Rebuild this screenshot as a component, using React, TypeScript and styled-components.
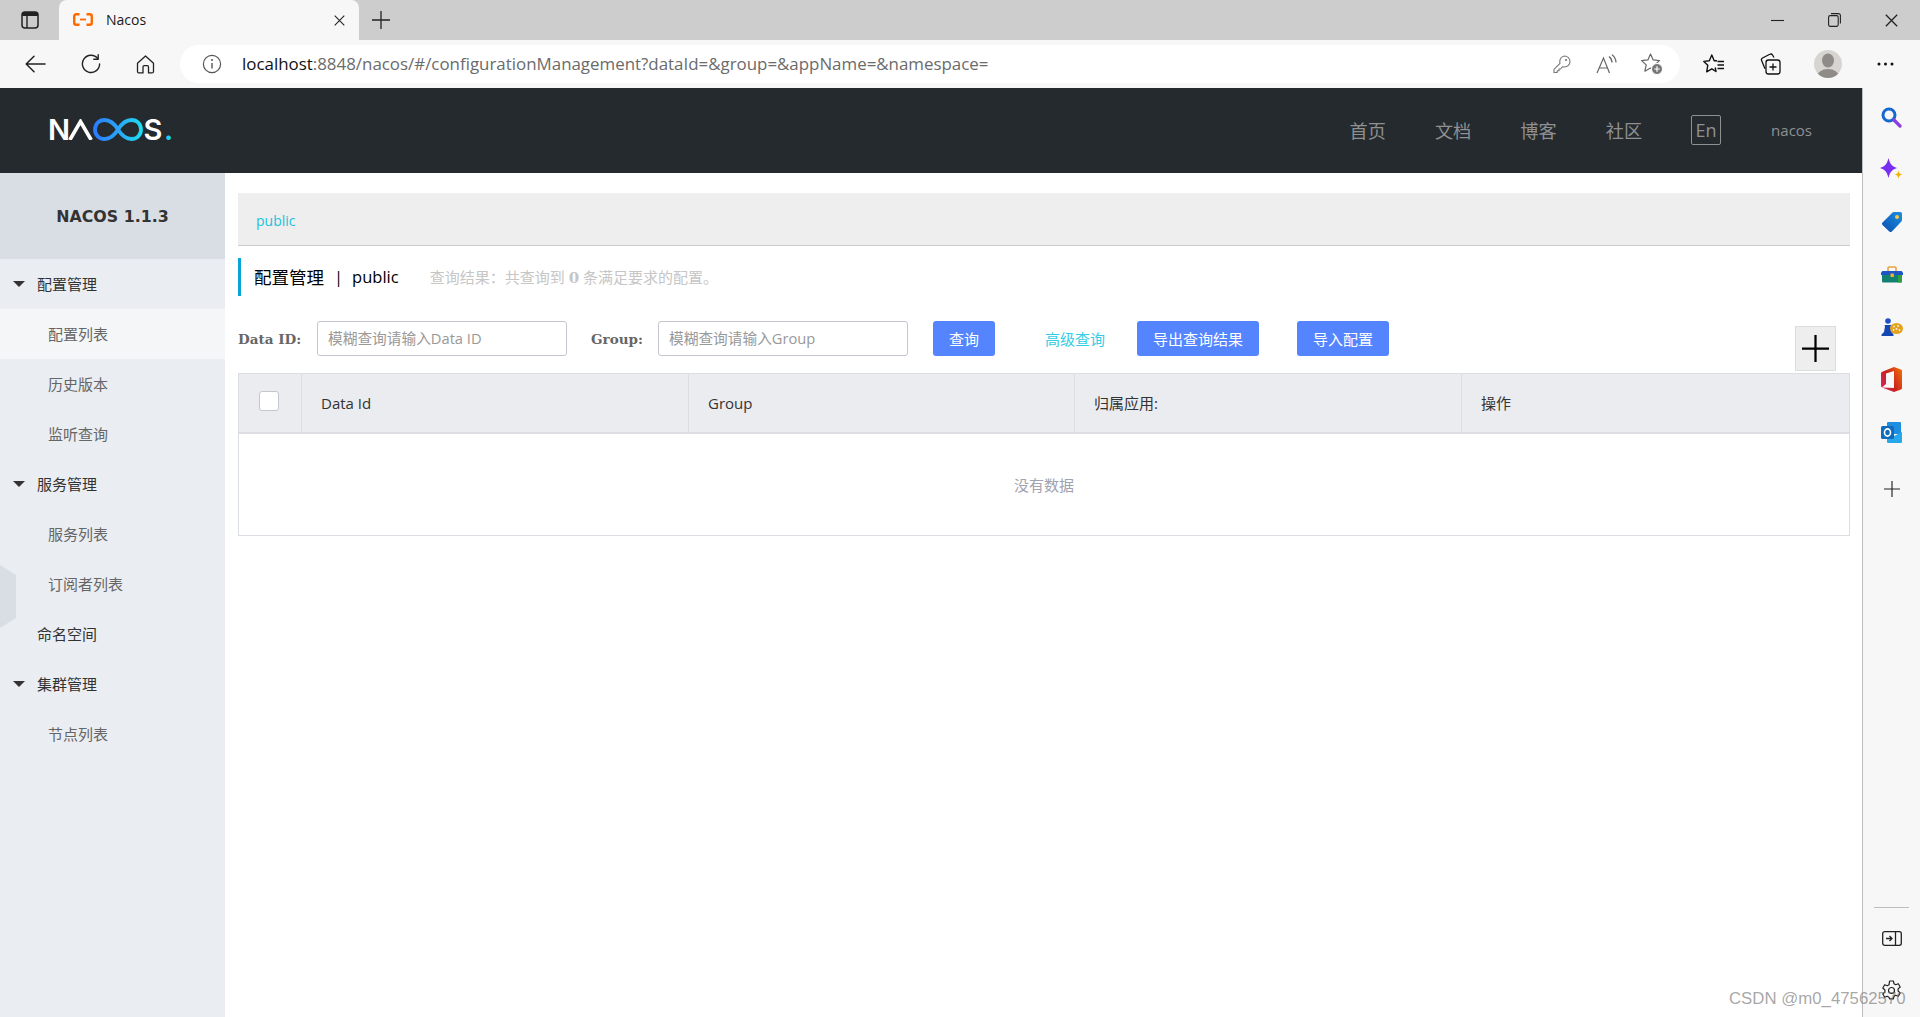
import React from "react";
import styled, { createGlobalStyle } from "styled-components";

const UI = `"Open Sans", "Noto Sans CJK SC", sans-serif`;

const Global = createGlobalStyle`
  html, body { margin: 0; padding: 0; overflow: hidden; background: #fff; }
  * { box-sizing: border-box; }
`;

const Root = styled.div`
  position: relative;
  width: 1920px;
  height: 1017px;
  display: flex;
  flex-direction: column;
  overflow: hidden;
  font-family: ${UI};
`;

/* browser chrome */
const TabStrip = styled.div`
  height: 40px;
  flex: none;
  display: flex;
  background: #cdcdcd;
`;
const TabActions = styled.div`
  width: 59px;
  display: flex;
  align-items: center;
  justify-content: center;
  padding: 0 0 1px 1px;
`;
const Tab = styled.div`
  width: 300px;
  height: 40px;
  display: flex;
  align-items: center;
  padding: 0 14px;
  background: #f7f7f7;
  border-radius: 8px 8px 0 0;
  color: #1a1a1a;
  font-size: 14px;
`;
const TabTitle = styled.span`
  margin: 0 0 2px 13px;
  flex: 1;
`;
const NewTab = styled.div`
  margin-left: 13px;
  width: 18px;
  display: flex;
  align-items: center;
`;
const WindowControls = styled.div`
  margin-left: auto;
  display: flex;
`;
const WindowButton = styled.div`
  width: 57px;
  height: 40px;
  display: flex;
  align-items: center;
  justify-content: center;
`;
const Toolbar = styled.div`
  height: 49px;
  flex: none;
  display: flex;
  align-items: flex-start;
  padding: 5px 0 0 8px;
  background: #f7f7f7;
  border-bottom: 1px solid #c6c6c6;
`;
const ToolButton = styled.div<{ $w?: number }>`
  width: ${(p) => p.$w ?? 55}px;
  height: 38px;
  flex: none;
  display: flex;
  align-items: center;
  justify-content: center;
`;
const AddressBar = styled.div`
  width: 1500px;
  height: 38px;
  margin: 0 6px 0 7px;
  padding: 0 6px 0 22px;
  display: flex;
  align-items: center;
  background: #fff;
  border-radius: 19px;
`;
const Url = styled.div`
  margin: 0 0 2px 20px;
  flex: 1;
  font-size: 16.9px;
  color: #6b6b6b;
  white-space: nowrap;
`;
const UrlHost = styled.span`
  color: #111;
`;

/* page */
const Body = styled.div`
  flex: 1;
  display: flex;
  min-height: 0;
  margin-top: -1px;
`;
const Page = styled.div`
  width: 1862px;
  flex: none;
  display: flex;
  flex-direction: column;
`;
const Header = styled.header`
  height: 85px;
  flex: none;
  display: flex;
  align-items: center;
  justify-content: space-between;
  padding: 0 50px 0 48px;
  background: #252a2f;
`;
const Logo = styled.div`
  display: flex;
  align-items: center;
  height: 32px;
  margin-bottom: 3px;
  font-family: Inter, sans-serif;
  font-weight: 600;
  font-size: 29px;
  color: #fff;
`;
const LogoDot = styled.span`
  color: #1cd0ee;
  margin-left: 1.5px;
`;
const TopNav = styled.nav`
  display: flex;
  align-items: center;
  gap: 49px;
  padding-bottom: 2px;
`;
const TopLink = styled.span`
  font-size: 18.2px;
  color: #8e9092;
`;
const LangBox = styled.span`
  width: 30px;
  height: 30px;
  display: flex;
  align-items: center;
  justify-content: center;
  border: 1px solid #8e9092;
  border-radius: 2px;
  font-size: 18px;
  color: #8e9092;
`;
const UserName = styled.span`
  margin-left: 1px;
  font-size: 15px;
  color: #8e9092;
`;
const Content = styled.div`
  flex: 1;
  display: flex;
  min-height: 0;
`;

/* left menu */
const Sidebar = styled.aside`
  position: relative;
  width: 225px;
  flex: none;
  background: #eaedf1;
`;
const SidebarTitle = styled.div`
  height: 86px;
  display: flex;
  align-items: center;
  justify-content: center;
  background: #d9dee4;
  font-family: "DejaVu Sans", sans-serif;
  font-weight: 700;
  font-size: 15.8px;
  color: #333;
`;
const MenuItem = styled.div<{ $indent: number; $active?: boolean; $sub?: boolean }>`
  height: 50px;
  display: flex;
  align-items: center;
  padding: 0 0 1px ${(p) => p.$indent}px;
  font-size: 15px;
  color: ${(p) => (p.$sub ? "#666" : "#333")};
  background: ${(p) => (p.$active ? "#f4f6f8" : "transparent")};
`;
const Caret = styled.span`
  width: 0;
  height: 0;
  margin-right: 12px;
  border-left: 6px solid transparent;
  border-right: 6px solid transparent;
  border-top: 6px solid #333;
`;
const FoldHandle = styled.div`
  position: absolute;
  left: 0;
  top: 392px;
  width: 16px;
  height: 63px;
  background: #d9dee4;
  clip-path: polygon(0 0, 100% 16%, 100% 84%, 0 100%);
`;

/* main */
const Main = styled.main`
  flex: 1;
  min-width: 0;
  padding: 20px 12px 0 13px;
  background: #fff;
`;
const Breadcrumb = styled.div`
  height: 53px;
  padding: 2px 0 0 18px;
  display: flex;
  align-items: center;
  background: #eee;
  border-bottom: 1px solid #ccc;
  font-size: 14px;
  color: #19c2dc;
`;
const TitleRow = styled.div`
  height: 38px;
  margin-top: 12px;
  padding: 0 0 2px 13px;
  display: flex;
  align-items: center;
  border-left: 3px solid #09a5d6;
`;
const PageTitle = styled.span`
  font-size: 17.5px;
  color: #000;
`;
const TitleSep = styled.span`
  margin: 0 9px 0 10px;
  font-size: 16.5px;
  color: #000;
`;
const TitleSub = styled.span`
  font-size: 16.5px;
  color: #000;
`;
const ResultNote = styled.span`
  margin-left: 31px;
  font-size: 15px;
  color: #c6c6c6;
`;
const ResultCount = styled.b`
  font-family: "DejaVu Serif", serif;
  margin: 0 4px;
`;
const FilterRow = styled.div`
  height: 35px;
  margin-top: 25px;
  display: flex;
  align-items: center;
`;
const FieldLabel = styled.label<{ $w: number; $ml?: number }>`
  width: ${(p) => p.$w}px;
  margin-left: ${(p) => p.$ml ?? 0}px;
  flex: none;
  font-family: "DejaVu Serif", serif;
  font-weight: 700;
  font-size: 13.5px;
  color: #666;
`;
const TextField = styled.input`
  width: 250px;
  height: 35px;
  flex: none;
  padding: 0 10px 2px;
  border: 1px solid #c4c6cf;
  border-radius: 3px;
  background: #fff;
  outline: none;
  font-family: ${UI};
  font-size: 14.7px;
  &::placeholder {
    color: #999;
    opacity: 1;
  }
`;
const PrimaryButton = styled.button<{ $w: number; $ml: number }>`
  width: ${(p) => p.$w}px;
  margin-left: ${(p) => p.$ml}px;
  height: 35px;
  flex: none;
  padding: 0 0 1px;
  border: none;
  border-radius: 3px;
  background: #5584ff;
  color: #fff;
  font-family: ${UI};
  font-size: 15px;
`;
const TextLink = styled.a`
  margin-left: 50px;
  flex: none;
  font-size: 15px;
  color: #33cde5;
`;
const PlusButton = styled.div`
  width: 41px;
  height: 45px;
  margin: 5px 14px 0 auto;
  align-self: flex-start;
  flex: none;
  display: flex;
  align-items: center;
  justify-content: center;
  background: #eee;
  border: 1px solid #ddd;
`;
const Table = styled.div`
  margin-top: 17px;
  height: 163px;
  border: 1px solid #dcdee3;
  display: flex;
  flex-direction: column;
`;
const TableHead = styled.div`
  height: 60px;
  flex: none;
  display: grid;
  grid-template-columns: 63px 387px 386px 387px 1fr;
  background: #ebecf0;
  border-bottom: 2px solid #dcdee3;
`;
const HeadCell = styled.div<{ $last?: boolean }>`
  display: flex;
  align-items: center;
  padding: 0 0 1px 19px;
  font-size: 15px;
  color: #333;
  border-right: ${(p) => (p.$last ? "none" : "1px solid #dcdee3")};
`;
const CheckCell = styled.div`
  padding: 17px 0 0 20px;
  border-right: 1px solid #dcdee3;
`;
const CheckBox = styled.span`
  display: block;
  width: 20px;
  height: 20px;
  background: #fff;
  border: 1px solid #c4c6cf;
  border-radius: 3px;
`;
const EmptyCell = styled.div`
  flex: 1;
  display: flex;
  align-items: center;
  justify-content: center;
  padding-bottom: 1px;
  font-size: 15px;
  color: #a0a2ad;
`;

/* Edge side panel */
const SidePanel = styled.aside`
  flex: 1;
  display: flex;
  flex-direction: column;
  align-items: center;
  padding-top: 3px;
  background: #f7f7f7;
  border-left: 1px solid #bdbdbd;
`;
const SideSlot = styled.div<{ $mt?: number }>`
  width: 100%;
  height: 52.5px;
  flex: none;
  margin-top: ${(p) => p.$mt ?? 0}px;
  display: flex;
  align-items: center;
  justify-content: center;
`;
const SideRule = styled.div`
  width: 35px;
  height: 1px;
  margin: auto 0 4px;
  background: #bdbdbd;
`;
const Watermark = styled.div`
  position: absolute;
  left: 1729px;
  top: 989px;
  font-family: "Liberation Sans", sans-serif;
  font-size: 16.8px;
  line-height: 20px;
  color: rgba(110, 110, 110, 0.62);
  white-space: nowrap;
`;

/* icons */
const stroke = { fill: "none", stroke: "#222", strokeWidth: 1.3, strokeLinecap: "round" as const, strokeLinejoin: "round" as const };

const TabsIcon = () => (
  <svg width="18" height="18" viewBox="0 0 18 18">
    <rect x="1" y="1" width="16" height="16" rx="3" fill="none" stroke="#222" strokeWidth="1.5" />
    <path d="M1 5V4a3 3 0 0 1 3-3h10a3 3 0 0 1 3 3v1z" fill="#222" />
    <path d="M6 5v12" stroke="#222" strokeWidth="1.4" />
  </svg>
);
const Favicon = () => (
  <svg width="20" height="13" viewBox="0 0 20 13" style={{ flex: "none", marginBottom: 1 }}>
    <path d="M6.5 1.3H3.2A2 2 0 0 0 1.2 3.3v6.4a2 2 0 0 0 2 2h3.3M13.5 1.3h3.3a2 2 0 0 1 2 2v6.4a2 2 0 0 1-2 2h-3.3" fill="none" stroke="#ff6a00" strokeWidth="2.4" />
    <path d="M7 6.5h6" stroke="#ff6a00" strokeWidth="1.8" />
  </svg>
);
const CloseIcon = ({ s = 11 }: { s?: number }) => (
  <svg width={s} height={s} viewBox="0 0 11 11">
    <path d="M.7.7l9.6 9.6M10.3.7L.7 10.3" stroke="#222" strokeWidth="1.1" />
  </svg>
);
const PlusIcon = ({ s = 18, w = 1.3, c = "#222" }: { s?: number; w?: number; c?: string }) => (
  <svg width={s} height={s} viewBox="0 0 18 18">
    <path d="M9 0v18M0 9h18" stroke={c} strokeWidth={w} />
  </svg>
);
const MinimizeIcon = () => (
  <svg width="13" height="13" viewBox="0 0 13 13">
    <path d="M0 6.5h13" stroke="#222" strokeWidth="1.1" />
  </svg>
);
const RestoreIcon = () => (
  <svg width="13" height="14" viewBox="0 0 13 14">
    <rect x=".6" y="2.6" width="9.6" height="10.8" rx="1.6" fill="none" stroke="#222" strokeWidth="1.1" />
    <path d="M3 .6h7.4a2 2 0 0 1 2 2v8" fill="none" stroke="#222" strokeWidth="1.1" />
  </svg>
);
const BackIcon = () => (
  <svg width="21" height="18" viewBox="0 0 21 18">
    <path d="M20 9H1.5M9 1.2L1.2 9 9 16.8" {...stroke} strokeWidth={1.5} />
  </svg>
);
const RefreshIcon = () => (
  <svg width="20" height="20" viewBox="0 0 20 20">
    <path d="M16.8 4.6A8.6 8.6 0 1 0 18.6 10" {...stroke} strokeWidth={1.4} />
    <path d="M17.2.8v4.4h-4.4" {...stroke} strokeWidth={1.4} />
  </svg>
);
const HomeIcon = () => (
  <svg width="19" height="19" viewBox="0 0 19 19">
    <path d="M1.5 8.2L9.5 1l8 7.2v8.2a1.5 1.5 0 0 1-1.5 1.5h-3.5v-6a1.2 1.2 0 0 0-1.2-1.2H8.2A1.2 1.2 0 0 0 7 11.9v6H3a1.5 1.5 0 0 1-1.5-1.5z" {...stroke} />
  </svg>
);
const InfoIcon = () => (
  <svg width="20" height="20" viewBox="0 0 20 20" style={{ flex: "none" }}>
    <circle cx="10" cy="10" r="8.6" fill="none" stroke="#555" strokeWidth="1.2" />
    <path d="M10 9v5.5" stroke="#555" strokeWidth="1.4" />
    <circle cx="10" cy="6" r="1" fill="#555" />
  </svg>
);
const KeyIcon = () => (
  <svg width="18" height="19" viewBox="0 0 18 19">
    <path d="M11.5 1a5.5 5.5 0 0 1 0 11c-.7 0-1.3-.1-1.9-.3L7.5 14H6v1.8H4.2v1.7H1v-3.1l6-6c-.1-.5-.2-1-.2-1.5A5.5 5.5 0 0 1 11.5 1z" fill="none" stroke="#777" strokeWidth="1.1" strokeLinejoin="round" />
    <circle cx="13" cy="5" r="1.1" fill="#777" />
  </svg>
);
const ReadAloudIcon = () => (
  <svg width="21" height="20" viewBox="0 0 21 20">
    <path d="M1 19L7.5 4l6 15M3.2 14h8.8" fill="none" stroke="#666" strokeWidth="1.2" />
    <path d="M13 2.5c2 1.5 3 3.5 3 6M16 .8c2.5 2 4 4.7 4 7.7" fill="none" stroke="#666" strokeWidth="1.2" />
  </svg>
);
const FavAddIcon = () => (
  <svg width="22" height="22" viewBox="0 0 22 22">
    <path d="M9.5 1l2.7 5.9 6.3.7-4.7 4.3 1.3 6.3-5.600-3.200-5.600 3.200 1.300-6.300L.6 7.600l6.300-.7z" fill="none" stroke="#666" strokeWidth="1.2" strokeLinejoin="round" />
    <circle cx="16" cy="16" r="5.5" fill="#777" stroke="#fff" strokeWidth="1" />
    <path d="M16 13.3v5.4M13.3 16h5.4" stroke="#fff" strokeWidth="1.2" />
  </svg>
);
const FavListIcon = () => (
  <svg width="22" height="20" viewBox="0 0 22 20">
    <path d="M14 6.7h-2.800L8.800 1 6.300 6.700l-5.500.7 4 3.800-1.100 6.600 5.100-3 4.200 2.700-.8-4" fill="none" stroke="#111" strokeWidth="1.4" strokeLinejoin="round" />
    <path d="M14.5 7.5H21M14.5 11H21M14.5 14.5H21" stroke="#111" strokeWidth="1.3" />
  </svg>
);
const CollectionsIcon = () => (
  <svg width="21" height="22" viewBox="0 0 21 22">
    <rect x="6" y="7" width="14" height="14" rx="2.5" fill="none" stroke="#111" strokeWidth="1.3" />
    <path d="M13 10.5v7M9.5 14h7" stroke="#111" strokeWidth="1.3" />
    <path d="M14 4.5L12.5 2a2 2 0 0 0-2.700-.7L2.500 5a2 2 0 0 0-.8 2.700l3.300 8" fill="none" stroke="#111" strokeWidth="1.3" />
  </svg>
);
const Avatar = () => (
  <svg width="28" height="28" viewBox="0 0 28 28">
    <defs>
      <clipPath id="av">
        <circle cx="14" cy="14" r="14" />
      </clipPath>
    </defs>
    <circle cx="14" cy="14" r="14" fill="#d6d5d2" />
    <g clipPath="url(#av)" fill="#8f8c88">
      <ellipse cx="14" cy="10.5" rx="6" ry="7" />
      <ellipse cx="14" cy="26.5" rx="11" ry="7.5" />
    </g>
  </svg>
);
const DotsIcon = () => (
  <svg width="17" height="4" viewBox="0 0 17 4">
    <circle cx="2" cy="2" r="1.5" fill="#111" />
    <circle cx="8.5" cy="2" r="1.5" fill="#111" />
    <circle cx="15" cy="2" r="1.5" fill="#111" />
  </svg>
);
const LogoPeak = () => (
  <svg width="25" height="21" viewBox="0 0 25 21" style={{ margin: "0 0 0 -2.5px" }}>
    <path d="M1.8 21L12.5 2.500 23.200 21" fill="none" stroke="#fff" strokeWidth="3.6" />
  </svg>
);
const LogoLoop = () => (
  <svg width="50" height="23" viewBox="0 0 50 23" style={{ margin: "0 1px 0 0" }}>
    <defs>
      <linearGradient id="inf" x1="0" x2="1" y1="0" y2="0">
        <stop offset="0" stopColor="#2b7dff" />
        <stop offset="0.55" stopColor="#2aa8f5" />
        <stop offset="1" stopColor="#1cdcf2" />
      </linearGradient>
    </defs>
    <path
      d="M25 11.5C21 5 16.5 2 11.5 2 5.8 2 2 6.300 2 11.5S5.800 21 11.500 21C16.500 21 21 18 25 11.500S33.500 2 38.500 2C44.200 2 48 6.300 48 11.500S44.200 21 38.500 21C33.500 21 29 18 25 11.500z"
      fill="none"
      stroke="url(#inf)"
      strokeWidth="3.8"
    />
  </svg>
);
const BigPlus = () => <PlusIcon s={27} w={1.5} c="#000" />;

const SearchApp = () => (
  <svg width="21" height="21" viewBox="0 0 21 21">
    <circle cx="8" cy="8" r="6" fill="none" stroke="#1468d0" strokeWidth="3" />
    <path d="M13 13l6 6" stroke="#8a3ee0" strokeWidth="3.2" strokeLinecap="round" />
  </svg>
);
const SparkleApp = () => (
  <svg width="23" height="23" viewBox="0 0 23 23">
    <path d="M8.5 0C10 6 11.5 8 17 10 11.500 12 10 14 8.500 20 7 14 5.500 12 0 10 5.500 8 7 6 8.500 0z" fill="#7a2ff0" />
    <path d="M18.5 12.500c.4 2.500 1.200 3.300 4 4-2.800.7-3.600 1.500-4 4.500-.4-3-1.200-3.800-4-4.500 2.800-.7 3.600-1.500 4-4z" fill="#f5b400" />
  </svg>
);
const TagApp = () => (
  <svg width="22" height="22" viewBox="0 0 22 22">
    <defs>
      <linearGradient id="tag" x1="0" x2="1" y1="1" y2="0">
        <stop offset="0" stopColor="#0a4fb0" />
        <stop offset="1" stopColor="#1b8fe0" />
      </linearGradient>
    </defs>
    <path d="M13 1h6.5a1.500 1.500 0 0 1 1.500 1.500V9a2 2 0 0 1-.6 1.400l-9.500 10a1.800 1.800 0 0 1-2.600 0L1.500 14a1.800 1.800 0 0 1 0-2.600l10-9.800A2 2 0 0 1 13 1z" fill="url(#tag)" />
    <circle cx="16" cy="6" r="2" fill="#f7c948" />
  </svg>
);
const ToolboxApp = () => (
  <svg width="22" height="17" viewBox="0 0 22 17">
    <path d="M7 5V2a1 1 0 0 1 1-1h6a1 1 0 0 1 1 1v3" fill="none" stroke="#e8a33d" strokeWidth="1.6" />
    <path d="M0 6.5L1.5 5h19L22 6.500V9H0z" fill="#1d55c4" />
    <path d="M1 9h20v6.5a1 1 0 0 1-1 1H2a1 1 0 0 1-1-1z" fill="#14806f" />
    <path d="M17 9h4v6.5a1 1 0 0 1-1 1h-3z" fill="#2ea043" />
    <rect x="9.5" y="7.5" width="3.4" height="3.4" rx=".6" fill="#f2b431" />
  </svg>
);
const ChessApp = () => (
  <svg width="22" height="19" viewBox="0 0 22 19">
    <circle cx="7" cy="3" r="2.8" fill="#1f4fc8" />
    <path d="M3.5 7h7l-1 1.500 1 5.500 2 2.500V18H.5v-1.500l2.500-2.500 1-5.500z" fill="#1446b5" />
    <ellipse cx="15.5" cy="10.5" rx="6.5" ry="5.5" fill="#e3a11f" />
    <g fill="#fff3cf">
      <circle cx="13" cy="8.5" r=".9" />
      <circle cx="17" cy="8" r=".9" />
      <circle cx="15.5" cy="11" r=".9" />
      <circle cx="12.5" cy="12" r=".9" />
      <circle cx="18.5" cy="12" r=".9" />
    </g>
  </svg>
);
const OfficeApp = () => (
  <svg width="21" height="25" viewBox="0 0 21 25">
    <defs>
      <linearGradient id="off" x1="0" x2="1" y1="0.8" y2="0.2">
        <stop offset="0" stopColor="#d9265f" />
        <stop offset="0.45" stopColor="#c9201e" />
        <stop offset="1" stopColor="#ec6a08" />
      </linearGradient>
    </defs>
    <path d="M13 0l7 2.500c.6.200 1 .8 1 1.400v17.200c0 .6-.4 1.200-1 1.400L13 25 1 20.500 13 21V4L5 6.500V17L1 20.500c-.6-.5-1-1-1-1.700V6.500c0-.8.500-1.500 1.200-1.800z" fill="url(#off)" />
  </svg>
);
const OutlookApp = () => (
  <svg width="21" height="21" viewBox="0 0 21 21">
    <rect x="6" y="0" width="14" height="12" rx="1" fill="#1f8ee0" />
    <path d="M6 10l7 4 8-4v10a1 1 0 0 1-1 1H7a1 1 0 0 1-1-1z" fill="#28a8ea" />
    <rect x="0" y="4" width="13" height="13" rx="1.5" fill="#0f6cbd" />
    <ellipse cx="6.5" cy="10.5" rx="3" ry="3.6" fill="none" stroke="#fff" strokeWidth="1.6" />
  </svg>
);
const PanelIcon = () => (
  <svg width="20" height="15" viewBox="0 0 20 15">
    <rect x=".7" y=".7" width="18.6" height="13.6" rx="2" fill="none" stroke="#222" strokeWidth="1.3" />
    <path d="M13.5 1v13" stroke="#222" strokeWidth="1.3" />
    <path d="M4 7.5h6M7.5 5l2.500 2.500L7.500 10" fill="none" stroke="#222" strokeWidth="1.3" />
  </svg>
);
const GearIcon = () => (
  <svg width="21" height="21" viewBox="0 0 21 21">
    <path d="M8.6 1h3.800l.6 2.800 1.700.9 2.600-1 1.900 3.300-2.100 1.900v2.100l2.100 1.900-1.900 3.300-2.600-1-1.700.9-.6 2.800H8.600L8 17.200l-1.700-.9-2.600 1-1.900-3.300 2.100-1.900V10L1.800 8l1.900-3.300 2.600 1L8 4.800z" fill="none" stroke="#222" strokeWidth="1.2" strokeLinejoin="round" />
    <circle cx="10.5" cy="10.5" r="3" fill="none" stroke="#222" strokeWidth="1.2" />
  </svg>
);

const menu: { label: string; indent: number; caret?: boolean; sub?: boolean; active?: boolean }[] = [
  { label: "配置管理", indent: 13, caret: true },
  { label: "配置列表", indent: 48, sub: true, active: true },
  { label: "历史版本", indent: 48, sub: true },
  { label: "监听查询", indent: 48, sub: true },
  { label: "服务管理", indent: 13, caret: true },
  { label: "服务列表", indent: 48, sub: true },
  { label: "订阅者列表", indent: 48, sub: true },
  { label: "命名空间", indent: 37 },
  { label: "集群管理", indent: 13, caret: true },
  { label: "节点列表", indent: 48, sub: true },
];

export default function App() {
  return (
    <Root>
      <Global />
      <TabStrip>
        <TabActions>
          <TabsIcon />
        </TabActions>
        <Tab>
          <Favicon />
          <TabTitle>Nacos</TabTitle>
          <CloseIcon />
        </Tab>
        <NewTab>
          <PlusIcon />
        </NewTab>
        <WindowControls>
          <WindowButton>
            <MinimizeIcon />
          </WindowButton>
          <WindowButton>
            <RestoreIcon />
          </WindowButton>
          <WindowButton>
            <CloseIcon s={13} />
          </WindowButton>
        </WindowControls>
      </TabStrip>
      <Toolbar>
        <ToolButton>
          <BackIcon />
        </ToolButton>
        <ToolButton>
          <RefreshIcon />
        </ToolButton>
        <ToolButton>
          <HomeIcon />
        </ToolButton>
        <AddressBar>
          <InfoIcon />
          <Url>
            <UrlHost>localhost</UrlHost>:8848/nacos/#/configurationManagement?dataId=&amp;group=&amp;appName=&amp;namespace=
          </Url>
          <ToolButton $w={45}>
            <KeyIcon />
          </ToolButton>
          <ToolButton $w={45}>
            <ReadAloudIcon />
          </ToolButton>
          <ToolButton $w={45}>
            <FavAddIcon />
          </ToolButton>
        </AddressBar>
        <ToolButton $w={56}>
          <FavListIcon />
        </ToolButton>
        <ToolButton $w={56}>
          <CollectionsIcon />
        </ToolButton>
        <ToolButton $w={60}>
          <Avatar />
        </ToolButton>
        <ToolButton $w={55}>
          <DotsIcon />
        </ToolButton>
      </Toolbar>
      <Body>
        <Page>
          <Header>
            <Logo>
              N
              <LogoPeak />
              <LogoLoop />
              S<LogoDot>.</LogoDot>
            </Logo>
            <TopNav>
              <TopLink>首页</TopLink>
              <TopLink>文档</TopLink>
              <TopLink>博客</TopLink>
              <TopLink>社区</TopLink>
              <LangBox>En</LangBox>
              <UserName>nacos</UserName>
            </TopNav>
          </Header>
          <Content>
            <Sidebar>
              <SidebarTitle>NACOS 1.1.3</SidebarTitle>
              {menu.map((m) => (
                <MenuItem key={m.label} $indent={m.indent} $sub={m.sub} $active={m.active}>
                  {m.caret && <Caret />}
                  {m.label}
                </MenuItem>
              ))}
              <FoldHandle />
            </Sidebar>
            <Main>
              <Breadcrumb>public</Breadcrumb>
              <TitleRow>
                <PageTitle>配置管理</PageTitle>
                <TitleSep>|</TitleSep>
                <TitleSub>public</TitleSub>
                <ResultNote>
                  查询结果：共查询到<ResultCount>0</ResultCount>条满足要求的配置。
                </ResultNote>
              </TitleRow>
              <FilterRow>
                <FieldLabel $w={79}>Data ID:</FieldLabel>
                <TextField placeholder="模糊查询请输入Data ID" readOnly />
                <FieldLabel $w={67} $ml={24}>
                  Group:
                </FieldLabel>
                <TextField placeholder="模糊查询请输入Group" readOnly />
                <PrimaryButton $w={62} $ml={25}>
                  查询
                </PrimaryButton>
                <TextLink>高级查询</TextLink>
                <PrimaryButton $w={122} $ml={32}>
                  导出查询结果
                </PrimaryButton>
                <PrimaryButton $w={92} $ml={38}>
                  导入配置
                </PrimaryButton>
                <PlusButton>
                  <BigPlus />
                </PlusButton>
              </FilterRow>
              <Table>
                <TableHead>
                  <CheckCell>
                    <CheckBox />
                  </CheckCell>
                  <HeadCell>Data Id</HeadCell>
                  <HeadCell>Group</HeadCell>
                  <HeadCell>归属应用:</HeadCell>
                  <HeadCell $last>操作</HeadCell>
                </TableHead>
                <EmptyCell>没有数据</EmptyCell>
              </Table>
            </Main>
          </Content>
        </Page>
        <SidePanel>
          <SideSlot>
            <SearchApp />
          </SideSlot>
          <SideSlot>
            <SparkleApp />
          </SideSlot>
          <SideSlot>
            <TagApp />
          </SideSlot>
          <SideSlot>
            <ToolboxApp />
          </SideSlot>
          <SideSlot>
            <ChessApp />
          </SideSlot>
          <SideSlot>
            <OfficeApp />
          </SideSlot>
          <SideSlot>
            <OutlookApp />
          </SideSlot>
          <SideSlot $mt={4}>
            <PlusIcon s={16} />
          </SideSlot>
          <SideRule />
          <SideSlot>
            <PanelIcon />
          </SideSlot>
          <SideSlot>
            <GearIcon />
          </SideSlot>
        </SidePanel>
      </Body>
      <Watermark>CSDN @m0_47562570</Watermark>
    </Root>
  );
}
